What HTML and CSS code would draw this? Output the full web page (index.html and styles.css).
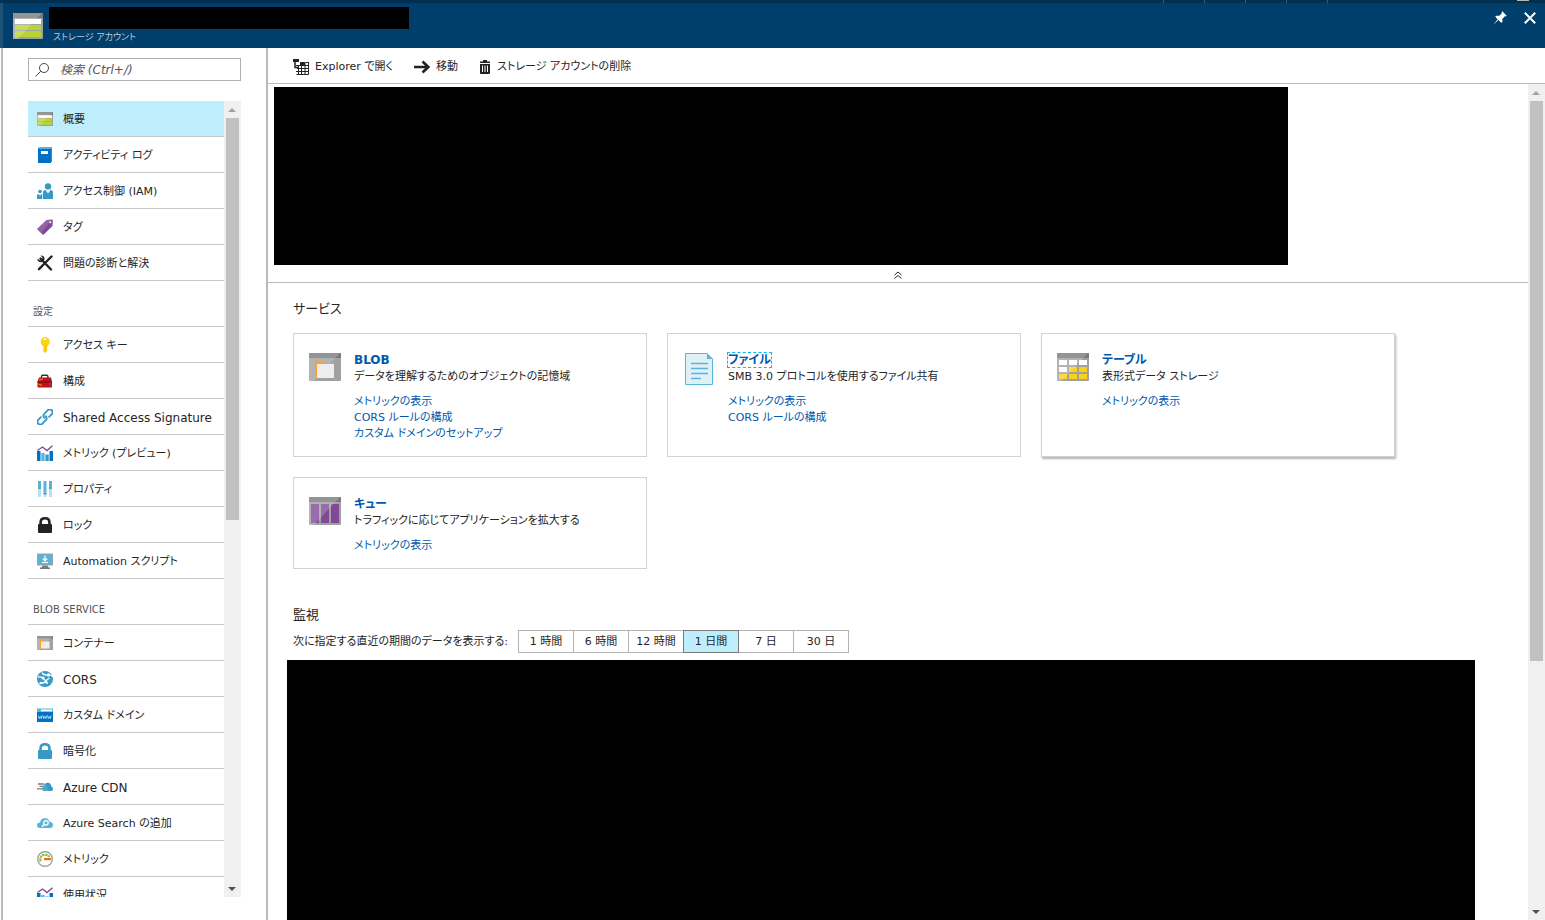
FILE: index.html
```html
<!DOCTYPE html>
<html lang="ja">
<head>
    <meta charset="UTF-8">
    <meta name="viewport" content="width=device-width, initial-scale=1.0">
    <title>ストレージ アカウント</title>
    <link rel="stylesheet" href="styles.css">
</head>
<body>
    <!-- アイコン定義 -->
    <svg class="sprite" aria-hidden="true">
        <symbol id="i-storage" viewBox="0 0 30 26">
            <rect width="30" height="26" rx="1" fill="#a0a1a2"/>
            <path d="M1 0h28a1 1 0 0 1 1 1v4H0V1a1 1 0 0 1 1-1z" fill="#7a7a7a"/>
            <rect x="2" y="6" width="26" height="5" fill="#fff"/>
            <rect x="2" y="12" width="26" height="5" fill="#b8d432"/>
            <rect x="2" y="18" width="26" height="6" fill="#b8d432"/>
            <path d="M0 0h29L5 26H0z" fill="#fff" opacity=".2"/>
        </symbol>
        <symbol id="i-log" viewBox="0 0 16 16">
            <rect x="1" y="1" width="13" height="15" fill="#0072c6"/>
            <rect x="2" y="0" width="13" height="2" fill="#59b4d9"/>
            <rect x="14" y="1" width="1" height="14" fill="#3a8ccf"/>
            <rect x="4" y="4" width="7" height="3" fill="#fff"/>
        </symbol>
        <symbol id="i-iam" viewBox="0 0 16 16">
            <g fill="#3999c6">
                <circle cx="11" cy="3.4" r="3.2"/>
                <path d="M6 16V9.500Q6 7 8.500 7l2.500 3.500L13.500 7Q16 7 16 9.500V16z"/>
                <circle cx="3" cy="8.500" r="1.800"/>
                <path d="M0 16v-3.500Q0 11 1.500 11L3 12.800 4.500 11q.800 0 .800.800V16z"/>
            </g>
        </symbol>
        <symbol id="i-tag" viewBox="0 0 16 16">
            <path d="M9.500 1 15 .600q.800 0 .800.800L15.500 7 6.800 15.400q-.600.500-1.200 0L.500 10.800q-.500-.600 0-1.200z" fill="#804998"/>
            <path d="M9.500 1 15 .600 4 13.800.500 10.800q-.500-.600 0-1.200z" fill="#fff" opacity=".15"/>
            <circle cx="13.300" cy="3.200" r="1" fill="#fff"/>
        </symbol>
        <symbol id="i-tools" viewBox="0 0 16 16">
            <path d="M3.500 3.500 14 14.500M14.500 1.500 9 7M7 9l-5 5.200" stroke="#222" stroke-width="2.400" stroke-linecap="round" fill="none"/>
            <path d="M.500 3.500 3 5.500 5 4.800 5.500 2.500 3.500.500Q6 0 7.200 2 8 4 7 5.500L5 7Q2 7.500 1 6 .300 5 .500 3.500z" fill="#222"/>
        </symbol>
        <symbol id="i-key" viewBox="0 0 16 16">
            <path d="M8 0a4.800 4.800 0 0 1 2.200 9V14L8.300 16 6.300 14.500V9A4.800 4.800 0 0 1 8 0z" fill="#fcd116"/>
            <rect x="6.500" y="1.500" width="3" height="1.500" rx=".700" fill="#fff"/>
            <path d="M8.600 7v7" stroke="#ffb900" stroke-width=".800"/>
        </symbol>
        <symbol id="i-toolbox" viewBox="0 0 16 16">
            <path d="M4.500 5V3.500Q4.500 2.300 5.700 2.300h4q1.200 0 1.200 1.200V5" fill="none" stroke="#333" stroke-width="1.400"/>
            <path d="M2 4.500h12l1 4v6H.500v-6z" fill="#ba141a"/>
            <path d="M.500 8.500h14.500v1.200H.500z" fill="#7a0c10"/>
            <path d="M2 7l4-1M1.500 11l3.500 1.500" stroke="#ff8c00" stroke-width="1.200"/>
            <path d="M13 9.500v3" stroke="#804998" stroke-width="1.500"/>
        </symbol>
        <symbol id="i-link" viewBox="0 0 16 16">
            <g fill="none" stroke="#3999c6" stroke-width="1.900" stroke-linecap="round" transform="rotate(-45 8 8)">
                <path d="M5 5.200H1.500Q-1.500 5.200-1.500 8t3 2.800h4.500q3 0 3-2.800"/>
                <path d="M11 10.800h3.500q3 0 3-2.800t-3-2.800H10Q7 5.200 7 8"/>
            </g>
        </symbol>
        <symbol id="i-chart" viewBox="0 0 16 16">
            <path d="M0 6h3.500v10H0zM12.500 6H16v10h-3.500z" fill="#0072c6"/>
            <path d="M4.300 8h3.300v8H4.300z" fill="#59b4d9"/>
            <path d="M8.400 9.500h3.300V16H8.400z" fill="#3999c6"/>
            <path d="m.500 5.500 5-3.500L10 5.500 15.500.800" fill="none" stroke="#804998" stroke-width="1.400"/>
        </symbol>
        <symbol id="i-props" viewBox="0 0 16 16">
            <path d="M1 0h3v6H1zM6.500 0h3v11.500h-3zM12 0h3v6h-3z" fill="#59b4d9"/>
            <path d="M1 7.500h3V16H1zM12 7.500h3V16h-3zM6.500 13h3v3h-3z" fill="#b9e2f0"/>
            <path d="M1 6.300h3v1.400H1zM12 6.300h3v1.400h-3zM6.500 11.800h3v1.400h-3z" fill="#3c85a3"/>
        </symbol>
        <symbol id="i-lock" viewBox="0 0 16 16">
            <path d="M3.600 8V5.200Q3.600 1.300 8 1.300t4.400 3.900V8" fill="none" stroke="currentColor" stroke-width="2.600"/>
            <rect x="1" y="7" width="14" height="9" rx="1" fill="currentColor"/>
        </symbol>
        <symbol id="i-script" viewBox="0 0 16 16">
            <rect width="16" height="12" y=".500" rx=".500" fill="#a0a1a2"/>
            <rect x="1" y="1.500" width="14" height="10" fill="#59b4d9"/>
            <path d="M5.500 12.500h5l1 2H13V16H3v-1.500h1.500z" fill="#7a7a7a"/>
            <path d="M8 2.500v5M5.800 5.500 8 7.800l2.200-2.300M5 9.500h6" fill="none" stroke="#fff" stroke-width="1.200"/>
        </symbol>
        <symbol id="i-blob" viewBox="0 0 32 28">
            <rect width="32" height="28" rx="1" fill="#a0a1a2"/>
            <path d="M1 0h30a1 1 0 0 1 1 1v4H0V1a1 1 0 0 1 1-1z" fill="#7a7a7a"/>
            <path d="M0 0h31L5 28H0z" fill="#fff" opacity=".2"/>
            <path d="M6 8h7l2 2h10v15H6z" fill="#ff9f2e"/>
            <rect x="8" y="11" width="17" height="14" fill="#eee"/>
        </symbol>
        <symbol id="i-file" viewBox="0 0 28 32">
            <path d="M.500.500H22L27.500 6v25.500H.500z" fill="#dff1f7" stroke="#59b4d9"/>
            <path d="M22 .500V6h5.500z" fill="#59b4d9"/>
            <path d="M6 10.500h17M6 15.500h17M6 20.500h17M6 25.500h10" stroke="#59b4d9" stroke-width="1.600"/>
        </symbol>
        <symbol id="i-table" viewBox="0 0 32 28">
            <rect width="32" height="28" rx="1" fill="#a0a1a2"/>
            <path d="M1 0h30a1 1 0 0 1 1 1v4H0V1a1 1 0 0 1 1-1z" fill="#7a7a7a"/>
            <path d="M2 7h8v5H2zM12 7h8v5h-8zM22 7h8v5h-8zM2 14h8v5H2z" fill="#fff"/>
            <path d="M12 14h8v5h-8zM22 14h8v5h-8zM2 21h8v5H2zM12 21h8v5h-8zM22 21h8v5h-8z" fill="#fcd116"/>
            <path d="M0 0h31L5 28H0z" fill="#fff" opacity=".2"/>
        </symbol>
        <symbol id="i-queue" viewBox="0 0 32 28">
            <rect width="32" height="28" rx="1" fill="#a0a1a2"/>
            <path d="M1 0h30a1 1 0 0 1 1 1v4H0V1a1 1 0 0 1 1-1z" fill="#7a7a7a"/>
            <path d="M2 7h8v19H2zM12 7h8v19h-8zM22 7h8v19h-8z" fill="#804998"/>
            <path d="M0 0h31L5 28H0z" fill="#fff" opacity=".2"/>
        </symbol>
        <symbol id="i-cors" viewBox="0 0 16 16">
            <circle cx="8" cy="8" r="8" fill="#3999c6"/>
            <path d="M1 6q3-.500 5 1t4.500 6M5 1.500Q6 4.500 11 4t4 2M2 12q3.500 1 5.500-1T12.500 7" fill="none" stroke="#fff" stroke-width="1.300"/>
            <g fill="#fff">
                <circle cx="6" cy="7" r="1.600"/>
                <circle cx="11.500" cy="4" r="1.700"/>
                <circle cx="9" cy="11" r="1.600"/>
                <circle cx="4" cy="12" r="1.200"/>
            </g>
        </symbol>
        <symbol id="i-domain" viewBox="0 0 16 16">
            <rect y="1.500" width="16" height="4" fill="#59b4d9"/>
            <rect x="4" y="2.500" width="11" height="1.800" fill="#fff"/>
            <rect y="5" width="16" height="10" fill="#0072c6"/>
            <path d="m1.500 8.500.800 3 1-2 1 2 .800-3M6 8.500l.800 3 1-2 1 2 .800-3M10.500 8.500l.800 3 1-2 1 2 .800-3" fill="none" stroke="#fff" stroke-width=".700"/>
        </symbol>
        <symbol id="i-cdn" viewBox="0 0 16 16">
            <path d="M6.500 12Q4 10 6.500 7.500q.800-4 4.500-3.800 3 .300 3.200 3.600Q16 8 16 10t-2 2z" fill="#3999c6"/>
            <path d="M1 5h6M2.500 7.300h4M0 9.800h6" stroke="#7a7a7a" stroke-width="1.300"/>
            <path d="M6.500 12h5L9 5Q7 6 6.500 7.500 4 10 6.500 12z" fill="#59b4d9" opacity=".6"/>
        </symbol>
        <symbol id="i-search-cloud" viewBox="0 0 16 16">
            <path d="M3 13Q0 12.800 0 10.300T3 7.500q.800-4.500 5-4.300 3.800.200 4.500 3.500Q16 7 16 10t-3 3z" fill="#59b4d9"/>
            <circle cx="9" cy="7.800" r="2.200" fill="none" stroke="#fff" stroke-width="1.300"/>
            <path d="M7.500 9.300 4.800 11.800" stroke="#fff" stroke-width="1.500"/>
        </symbol>
        <symbol id="i-gauge" viewBox="0 0 16 16">
            <circle cx="8" cy="8" r="7.300" fill="#fff" stroke="#a0a1a2" stroke-width="1.400"/>
            <path d="M3.500 10.500Q2.500 4 8 3.800q3 0 4.500 2.200" fill="none" stroke="#8cc832" stroke-width="2.200" stroke-dasharray="2.600 .500"/>
            <path d="M7 7h7v2.200H7z" fill="#f26a21"/>
        </symbol>
        <symbol id="i-explorer" viewBox="0 0 16 16">
            <path d="M0 0h6v3H0zM7 3h5v3H7z" fill="#222"/>
            <path d="M2 3v5.500h3" stroke="#222" stroke-width="1.500" fill="none"/>
            <path d="M3 6.500h12.500v9H3.500M4 9.500h11.500M3 12.500h12.500M5.500 6.500v9M8.500 6.500v9M12 4v11.500M15.500 3v12" stroke="#222" fill="none"/>
            <path d="M12.500 3.500h3" stroke="#222"/>
        </symbol>
        <symbol id="i-move" viewBox="0 0 16 16">
            <path d="M0 8h14M8.500 2.500 14.300 8l-5.800 5.500" fill="none" stroke="#222" stroke-width="2.600"/>
        </symbol>
        <symbol id="i-trash" viewBox="0 0 12 14">
            <path d="M1 1.500h3V0h4v1.500h3V3H1zM1 4h10v9q0 1-1 1H2q-1 0-1-1z" fill="#222"/>
            <path d="M3.500 5.500V12M6 5.500V12M8.500 5.500V12" stroke="#fff"/>
        </symbol>
        <symbol id="i-find" viewBox="0 0 16 16">
            <circle cx="10" cy="6" r="4.500" fill="none" stroke="#444"/>
            <path d="M6.800 9.200 1.500 14.500" stroke="#444"/>
        </symbol>
        <symbol id="i-pin" viewBox="0 0 14 14">
            <path d="M9.300.300 13.700 4.700 12.500 5.500 11.800 5.200 9.300 7.900 9.500 11 8.200 11.800 5.300 9 .300 13.700 4.600 8.300 2.200 5.800 3.300 4.700 6.300 4.800 8.900 2.200 8.500 1.200z" fill="#fff"/>
        </symbol>
        <symbol id="i-close" viewBox="0 0 12 12">
            <path d="m.800.800 10.400 10.400M11.200.800.800 11.200" stroke="#fff" stroke-width="2"/>
        </symbol>
        <symbol id="i-collapse" viewBox="0 0 8 8">
            <path d="m.500 4 3.500-3 3.500 3M.500 7.500l3.500-3 3.500 3" fill="none" stroke="#222"/>
        </symbol>
    </svg>

    <div class="topbar">
        <span class="topbar-slot"></span>
        <span class="topbar-slot"></span>
        <span class="topbar-slot"></span>
        <span class="topbar-slot"></span>
        <span class="topbar-slot"></span>
        <span class="topbar-avatar"></span>
    </div>

    <div class="blade">
        <header class="blade-header">
            <svg class="blade-icon"><use href="#i-storage"/></svg>
            <div class="blade-title">
                <div class="redacted redacted-name"></div>
                <p>ストレージ アカウント</p>
            </div>
            <button class="header-btn" aria-label="ピン留め"><svg width="14" height="14"><use href="#i-pin"/></svg></button>
            <button class="header-btn" aria-label="閉じる"><svg width="12" height="12"><use href="#i-close"/></svg></button>
        </header>

        <div class="blade-body">
            <div class="prev-blade"></div>
            <aside class="sidebar">
                <label class="search">
                    <svg width="16" height="16"><use href="#i-find"/></svg>
                    <input type="text" placeholder="検索 (Ctrl+/)" aria-label="検索">
                </label>
                <div class="menu">
                    <nav class="menu-list">
                        <a href="#" class="menu-item active"><svg class="wide"><use href="#i-storage"/></svg>概要</a>
                        <a href="#" class="menu-item"><svg><use href="#i-log"/></svg>アクティビティ ログ</a>
                        <a href="#" class="menu-item"><svg><use href="#i-iam"/></svg>アクセス制御 (IAM)</a>
                        <a href="#" class="menu-item"><svg><use href="#i-tag"/></svg>タグ</a>
                        <a href="#" class="menu-item"><svg><use href="#i-tools"/></svg>問題の診断と解決</a>
                        <h3 class="menu-group">設定</h3>
                        <a href="#" class="menu-item"><svg><use href="#i-key"/></svg>アクセス キー</a>
                        <a href="#" class="menu-item"><svg><use href="#i-toolbox"/></svg>構成</a>
                        <a href="#" class="menu-item" lang="en"><svg><use href="#i-link"/></svg>Shared Access Signature</a>
                        <a href="#" class="menu-item"><svg><use href="#i-chart"/></svg>メトリック (プレビュー)</a>
                        <a href="#" class="menu-item"><svg><use href="#i-props"/></svg>プロパティ</a>
                        <a href="#" class="menu-item"><svg class="dark"><use href="#i-lock"/></svg>ロック</a>
                        <a href="#" class="menu-item"><svg><use href="#i-script"/></svg>Automation スクリプト</a>
                        <h3 class="menu-group">BLOB SERVICE</h3>
                        <a href="#" class="menu-item"><svg class="wide"><use href="#i-blob"/></svg>コンテナー</a>
                        <a href="#" class="menu-item" lang="en"><svg><use href="#i-cors"/></svg>CORS</a>
                        <a href="#" class="menu-item"><svg><use href="#i-domain"/></svg>カスタム ドメイン</a>
                        <a href="#" class="menu-item"><svg class="blue"><use href="#i-lock"/></svg>暗号化</a>
                        <a href="#" class="menu-item" lang="en"><svg><use href="#i-cdn"/></svg>Azure CDN</a>
                        <a href="#" class="menu-item"><svg><use href="#i-search-cloud"/></svg>Azure Search の追加</a>
                        <a href="#" class="menu-item"><svg><use href="#i-gauge"/></svg>メトリック</a>
                        <a href="#" class="menu-item"><svg><use href="#i-chart"/></svg>使用状況</a>
                    </nav>
                    <div class="scrollbar">
                        <span class="arrow up"></span>
                        <span class="thumb menu-thumb"></span>
                        <span class="arrow down"></span>
                    </div>
                </div>
            </aside>

            <main class="main">
                <div class="toolbar">
                    <button class="tool"><svg width="16" height="16"><use href="#i-explorer"/></svg>Explorer で開く</button>
                    <button class="tool"><svg width="16" height="16"><use href="#i-move"/></svg>移動</button>
                    <button class="tool"><svg width="12" height="14"><use href="#i-trash"/></svg>ストレージ アカウントの削除</button>
                </div>

                <div class="content">
                    <div class="content-scroll">
                        <section class="essentials">
                            <div class="redacted redacted-essentials"></div>
                            <button class="collapse" aria-label="折りたたむ"><svg width="8" height="8"><use href="#i-collapse"/></svg></button>
                        </section>

                        <section class="services">
                            <h2>サービス</h2>
                            <div class="card-grid">
                                <article class="card">
                                    <svg width="32" height="28"><use href="#i-blob"/></svg>
                                    <div class="card-info">
                                        <h3><a href="#">BLOB</a></h3>
                                        <p>データを理解するためのオブジェクトの記憶域</p>
                                        <ul>
                                            <li><a href="#">メトリックの表示</a></li>
                                            <li><a href="#">CORS ルールの構成</a></li>
                                            <li><a href="#">カスタム ドメインのセットアップ</a></li>
                                        </ul>
                                    </div>
                                </article>
                                <article class="card">
                                    <svg width="32" height="32"><use href="#i-file"/></svg>
                                    <div class="card-info">
                                        <h3><a href="#" class="focused">ファイル</a></h3>
                                        <p>SMB 3.0 プロトコルを使用するファイル共有</p>
                                        <ul>
                                            <li><a href="#">メトリックの表示</a></li>
                                            <li><a href="#">CORS ルールの構成</a></li>
                                        </ul>
                                    </div>
                                </article>
                                <article class="card raised">
                                    <svg width="32" height="28"><use href="#i-table"/></svg>
                                    <div class="card-info">
                                        <h3><a href="#">テーブル</a></h3>
                                        <p>表形式データ ストレージ</p>
                                        <ul>
                                            <li><a href="#">メトリックの表示</a></li>
                                        </ul>
                                    </div>
                                </article>
                                <article class="card">
                                    <svg width="32" height="28"><use href="#i-queue"/></svg>
                                    <div class="card-info">
                                        <h3><a href="#">キュー</a></h3>
                                        <p>トラフィックに応じてアプリケーションを拡大する</p>
                                        <ul>
                                            <li><a href="#">メトリックの表示</a></li>
                                        </ul>
                                    </div>
                                </article>
                            </div>
                        </section>

                        <section class="monitoring">
                            <h2>監視</h2>
                            <div class="range">
                                <span>次に指定する直近の期間のデータを表示する:</span>
                                <div class="range-buttons">
                                    <button>1 時間</button>
                                    <button>6 時間</button>
                                    <button>12 時間</button>
                                    <button class="selected">1 日間</button>
                                    <button>7 日</button>
                                    <button>30 日</button>
                                </div>
                            </div>
                        </section>
                        <div class="redacted redacted-charts"></div>
                    </div>
                    <div class="scrollbar">
                        <span class="arrow up"></span>
                        <span class="thumb main-thumb"></span>
                        <span class="arrow down"></span>
                    </div>
                </div>
            </main>
        </div>
    </div>
</body>
</html>
```
FILE: styles.css
```css
:root {
    --color-header: #003e6b;
    --color-topbar: #002f50;
    --color-line: #bababa;
    --color-row: #c8c8c8;
    --color-text: #252525;
    --color-link: #0058ad;
    --color-active: #beeefb;
}

* {
    margin: 0;
    padding: 0;
    box-sizing: border-box;
}

body {
    height: 100vh;
    display: flex;
    flex-direction: column;
    overflow: hidden;
    background: #fff;
    color: var(--color-text);
    font-family: "DejaVu Sans", "Noto Sans CJK JP", sans-serif;
    font-size: 11px;
    line-height: 16px;
    font-feature-settings: "palt";
}

button,
input {
    font: inherit;
    font-feature-settings: inherit;
    color: inherit;
    background: none;
    border: 0;
}

a {
    color: var(--color-link);
    text-decoration: none;
}

ul {
    list-style: none;
}

svg {
    flex-shrink: 0;
}

.sprite {
    position: absolute;
    width: 0;
    height: 0;
}

.redacted {
    background: #000;
}

/* Top bar */
.topbar {
    height: 3px;
    flex-shrink: 0;
    display: flex;
    justify-content: flex-end;
    background: var(--color-topbar);
    padding-right: 16px;
}

.topbar-slot {
    width: 41px;
    border-left: 1px solid #335973;
}

.topbar-avatar {
    width: 12px;
    height: 1px;
    margin-left: 149px;
    background: #b5b5a8;
}

/* Blade */
.blade {
    flex: 1;
    min-height: 0;
    display: flex;
    flex-direction: column;
}

.blade-header {
    height: 45px;
    flex-shrink: 0;
    display: flex;
    align-items: flex-start;
    background: var(--color-header);
    border-left: 3px solid #1c5178;
    padding: 4px 7px 0 10px;
}

.blade-icon {
    width: 30px;
    height: 26px;
    margin: 6px 6px 0 0;
}

.blade-title {
    flex: 1;
    color: #b8cbd9;
    font-size: 9px;
    line-height: 14px;
}

.blade-title p {
    padding: 1px 0 0 4px;
}

.redacted-name {
    width: 360px;
    height: 22px;
}

.header-btn {
    display: flex;
    align-items: center;
    justify-content: center;
    width: 16px;
    height: 22px;
    margin-left: 14px;
}

.blade-body {
    flex: 1;
    min-height: 0;
    display: flex;
}

.prev-blade {
    width: 3px;
    height: 100%;
    border-right: 2px solid var(--color-line);
}

/* Sidebar */
.sidebar {
    width: 265px;
    flex-shrink: 0;
    display: flex;
    flex-direction: column;
    border-right: 2px solid var(--color-line);
    padding: 10px 25px 23px;
}

.search {
    display: flex;
    align-items: center;
    height: 23px;
    flex-shrink: 0;
    margin-bottom: 20px;
    padding-left: 5px;
    border: 1px solid #b0b0b0;
}

.search input {
    flex: 1;
    min-width: 0;
    padding-left: 10px;
    font-size: 12px;
    font-style: italic;
    outline: none;
}

.search input::placeholder {
    color: #555;
}

.menu {
    flex: 1;
    min-height: 0;
    display: flex;
}

.menu-list {
    flex: 1;
    overflow: hidden;
}

.menu-item {
    display: flex;
    align-items: center;
    gap: 10px;
    height: 36px;
    padding: 3px 0 0 9px;
    border-bottom: 1px solid var(--color-row);
    color: var(--color-text);
    white-space: nowrap;
}

.menu-item:lang(en) {
    font-size: 12px;
}

.menu-item.active {
    background: var(--color-active);
}

.menu-item svg {
    width: 16px;
    height: 16px;
    margin-bottom: 2px;
}

.menu-item svg.wide {
    height: 14px;
}

.menu-item svg.dark {
    color: #222;
}

.menu-item svg.blue {
    color: #3999c6;
}

.menu-group {
    height: 46px;
    padding: 23px 5px 0;
    border-bottom: 1px solid var(--color-row);
    font-size: 10px;
    font-weight: 400;
    color: #555;
}

/* Scrollbars */
.scrollbar {
    width: 17px;
    flex-shrink: 0;
    display: flex;
    flex-direction: column;
    align-items: center;
    background: #f0f0f0;
}

.arrow {
    width: 16px;
    height: 17px;
    align-self: flex-start;
    display: flex;
    align-items: center;
    justify-content: center;
}

.arrow::before {
    content: '';
    border: 4px solid transparent;
}

.arrow.up::before {
    border-top: 0;
    border-bottom-color: #a3a3a3;
}

.arrow.down {
    margin-top: auto;
}

.arrow.down::before {
    border-bottom: 0;
    border-top-color: #505050;
}

.thumb {
    width: 13px;
    background: #c1c1c1;
}

.menu-thumb {
    height: 402px;
}

.main-thumb {
    height: 560px;
}

/* Toolbar */
.main {
    flex: 1;
    min-width: 0;
    display: flex;
    flex-direction: column;
}

.toolbar {
    height: 36px;
    flex-shrink: 0;
    display: flex;
    align-items: center;
    gap: 21px;
    padding: 2px 0 0 25px;
    border-bottom: 1px solid var(--color-line);
}

.tool {
    display: flex;
    align-items: center;
    gap: 6px;
}

.content {
    flex: 1;
    min-height: 0;
    display: flex;
}

.content-scroll {
    flex: 1;
    min-width: 0;
    display: flex;
    flex-direction: column;
    overflow: hidden;
}

/* Essentials */
.essentials {
    flex-shrink: 0;
    display: flex;
    flex-direction: column;
    padding: 3px 6px 0;
    border-bottom: 1px solid var(--color-line);
}

.redacted-essentials {
    max-width: 1014px;
    height: 178px;
}

.collapse {
    align-self: center;
    display: flex;
    align-items: center;
    justify-content: center;
    width: 20px;
    height: 17px;
    padding-top: 3px;
}

/* Services */
.services,
.monitoring {
    flex-shrink: 0;
    padding: 16px 25px 0;
}

h2 {
    font-size: 13px;
    line-height: 20px;
    font-weight: 400;
}

.card-grid {
    display: grid;
    grid-template-columns: repeat(auto-fill, 354px);
    gap: 20px;
    margin-top: 14px;
}

.card {
    display: flex;
    gap: 13px;
    padding: 17px 15px 14px;
    border: 1px solid #d3d3d3;
    white-space: nowrap;
}

.card.raised {
    box-shadow: 1px 2px 2px rgba(0, 0, 0, 0.3);
}

.card > svg {
    margin-top: 2px;
}

.card h3 {
    font-size: 12px;
    line-height: 18px;
    font-weight: 600;
}

.card ul {
    margin-top: 9px;
}

.focused {
    outline: 1px dashed #00bcf2;
}

/* Monitoring */
.monitoring {
    padding-top: 36px;
}

.range {
    display: flex;
    align-items: center;
    gap: 10px;
    margin-top: 5px;
    white-space: nowrap;
}

.range-buttons {
    display: flex;
}

.range-buttons button {
    width: 56px;
    height: 23px;
    margin-right: -1px;
    padding-top: 1px;
    border: 1px solid #b3b3b3;
}

.range-buttons .selected {
    position: relative;
    background: var(--color-active);
    border-color: #7a7a7a;
}

.redacted-charts {
    flex: 1;
    max-width: 1188px;
    margin: 7px 19px 0;
}
```
